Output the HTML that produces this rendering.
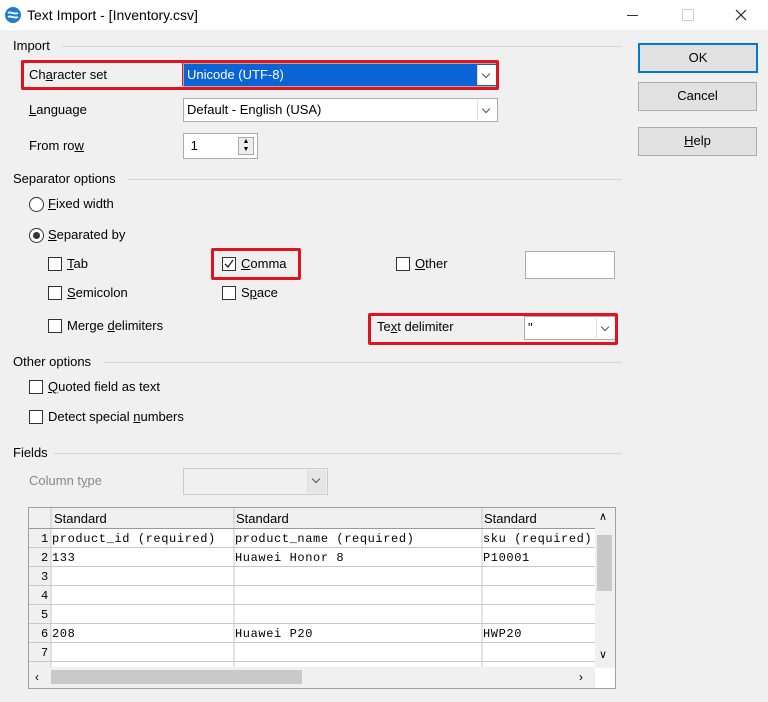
<!DOCTYPE html><html><head><style>
body{margin:0;width:768px;height:702px;background:#f0f0f0;font-family:"Liberation Sans",sans-serif;font-size:13px;color:#000;position:relative;overflow:hidden}
.a{position:absolute;white-space:nowrap}
.line{position:absolute;height:1px;background:#d5d5d5}
.btn{position:absolute;background:#e1e1e1;border:1px solid #adadad;text-align:center;line-height:26px;font-size:13px}
.cb{position:absolute;width:12px;height:12px;border:1px solid #333;background:#fff}
.red{position:absolute;border:3px solid #e0141e;border-radius:2px}
.sel{position:absolute;background:#fff;border:1px solid #acacac;font-size:13px;line-height:22px;padding-left:3px}
.arr{position:absolute;right:1px;top:1px;width:18px;bottom:1px;border-left:1px solid #ddd;background:#fff}
.arr:after{content:"";position:absolute;left:5px;top:6px;width:5px;height:5px;border-right:1.5px solid #555;border-bottom:1.5px solid #555;transform:rotate(45deg)}
.m{font-family:"Liberation Mono",monospace;font-size:12px;letter-spacing:0.6px}
.g{position:absolute;background:#fff;border:1px solid #a0a0a0}
</style></head><body>
<div class="a" style="left:0;top:0;width:768px;height:30px;background:#fff"></div>
<svg class="a" style="left:4px;top:6px" width="18" height="18" viewBox="0 0 18 18"><circle cx="9" cy="9" r="8" fill="#1e7fcf"/><path d="M4 7c3-2 6 2 10 0M4 11c3-2 6 2 10 0" stroke="#fff" stroke-width="1.8" fill="none"/></svg>
<div class="a" style="left:27px;top:7px;font-size:14px">Text Import - [Inventory.csv]</div>
<div class="a" style="left:627px;top:15px;width:11px;height:1px;background:#333"></div>
<div class="a" style="left:682px;top:9px;width:10px;height:10px;border:1px solid #ccc"></div>
<svg class="a" style="left:735px;top:9px" width="12" height="12"><path d="M1 1L11 11M11 1L1 11" stroke="#222" stroke-width="1.2"/></svg>

<div class="a" style="left:13px;top:38px">Import</div><div class="line" style="left:62px;top:46px;width:560px"></div>
<div class="sel" style="left:183px;top:63px;width:310px;height:22px;background:#0a64d6;color:#fff">Unicode (UTF-8)<div class="arr"></div></div>
<div class="red" style="left:21px;top:60px;width:472px;height:24px"></div>
<div class="a" style="left:29px;top:67px">Ch<u>a</u>racter set</div>
<div class="a" style="left:182px;top:62px;width:1px;height:24px;background:#e0141e"></div>
<div class="a" style="left:29px;top:102px"><u>L</u>anguage</div>
<div class="sel" style="left:183px;top:98px;width:310px;height:22px">Default - English (USA)<div class="arr"></div></div>
<div class="a" style="left:29px;top:138px">From ro<u>w</u></div>
<div class="sel" style="left:183px;top:133px;width:70px;height:24px;line-height:24px">&nbsp;1<div class="a" style="right:3px;top:3px;width:14px;height:16px;border:1px solid #aaa;background:#eee;font-size:7px;line-height:8px;text-align:center">▲<br>▼</div></div>

<div class="a" style="left:13px;top:171px">Separator options</div><div class="line" style="left:128px;top:179px;width:494px"></div>
<div class="a" style="left:29px;top:197px;width:13px;height:13px;border:1px solid #333;border-radius:50%;background:#fff"></div>
<div class="a" style="left:48px;top:196px"><u>F</u>ixed width</div>
<div class="a" style="left:29px;top:228px;width:13px;height:13px;border:1px solid #333;border-radius:50%;background:#fff"></div>
<div class="a" style="left:33px;top:232px;width:7px;height:7px;border-radius:50%;background:#333"></div>
<div class="a" style="left:48px;top:227px"><u>S</u>eparated by</div>
<div class="cb" style="left:48px;top:257px"></div><div class="a" style="left:67px;top:256px"><u>T</u>ab</div>
<div class="red" style="left:211px;top:248px;width:84px;height:26px"></div>
<div class="cb" style="left:222px;top:257px"></div><svg class="a" style="left:223px;top:258px" width="12" height="12"><path d="M2 6L5 9L10 2" stroke="#222" stroke-width="1.3" fill="none"/></svg><div class="a" style="left:241px;top:256px"><u>C</u>omma</div>
<div class="cb" style="left:396px;top:257px"></div><div class="a" style="left:415px;top:256px"><u>O</u>ther</div>
<div class="a" style="left:525px;top:251px;width:88px;height:26px;background:#fff;border:1px solid #acacac"></div>
<div class="cb" style="left:48px;top:286px"></div><div class="a" style="left:67px;top:285px"><u>S</u>emicolon</div>
<div class="cb" style="left:222px;top:286px"></div><div class="a" style="left:241px;top:285px">S<u>p</u>ace</div>
<div class="cb" style="left:48px;top:319px"></div><div class="a" style="left:67px;top:318px">Merge <u>d</u>elimiters</div>
<div class="sel" style="left:524px;top:316px;width:88px;height:22px">"<div class="arr"></div></div>
<div class="red" style="left:368px;top:313px;width:244px;height:26px"></div>
<div class="a" style="left:377px;top:319px">Te<u>x</u>t delimiter</div>

<div class="a" style="left:13px;top:354px">Other options</div><div class="line" style="left:105px;top:362px;width:517px"></div>
<div class="cb" style="left:29px;top:380px"></div><div class="a" style="left:48px;top:379px"><u>Q</u>uoted field as text</div>
<div class="cb" style="left:29px;top:410px"></div><div class="a" style="left:48px;top:409px">Detect special <u>n</u>umbers</div>

<div class="a" style="left:13px;top:445px">Fields</div><div class="line" style="left:54px;top:453px;width:568px"></div>
<div class="a" style="left:29px;top:473px;color:#888">Column t<u>y</u>pe</div>
<div class="a" style="left:183px;top:468px;width:143px;height:25px;background:#f0f0f0;border:1px solid #ccc"><div class="arr" style="background:#e6e6e6"></div></div>

<div class="g" style="left:28px;top:507px;width:586px;height:180px;overflow:hidden">
<svg class="a" style="left:0;top:0" width="586" height="180">
<rect x="0" y="0" width="22" height="160" fill="#f0f0f0"/><rect x="0" y="0" width="566" height="20" fill="#f0f0f0"/>
<g stroke="#c8c8c8"><line x1="22" y1="0" x2="22" y2="160"/><line x1="205" y1="0" x2="205" y2="160"/><line x1="453" y1="0" x2="453" y2="160"/>
<line x1="0" y1="20.5" x2="566" y2="20.5" stroke="#999"/><line x1="0" y1="39.5" x2="566" y2="39.5"/><line x1="0" y1="58.5" x2="566" y2="58.5"/><line x1="0" y1="77.5" x2="566" y2="77.5"/><line x1="0" y1="96.5" x2="566" y2="96.5"/><line x1="0" y1="115.5" x2="566" y2="115.5"/><line x1="0" y1="134.5" x2="566" y2="134.5"/><line x1="0" y1="153.5" x2="566" y2="153.5"/></g>
<rect x="0" y="159" width="566" height="21" fill="#f0f0f0"/><rect x="22" y="162" width="251" height="14" fill="#c9c9c9"/>
<rect x="566" y="0" width="20" height="160" fill="#f0f0f0"/><rect x="568" y="27" width="15" height="56" fill="#c9c9c9"/>
</svg>
<div class="a" style="left:25px;top:3px">Standard</div><div class="a" style="left:207px;top:3px">Standard</div><div class="a" style="left:455px;top:3px">Standard</div>
<div class="a" style="left:570px;top:2px;font-size:11px">∧</div><div class="a" style="left:570px;top:140px;font-size:11px">∨</div>
<div class="a" style="left:6px;top:162px;font-size:12px">‹</div><div class="a" style="left:550px;top:162px;font-size:12px">›</div>
<div class="a m" style="left:12px;top:22px;line-height:19px">1<br>2<br>3<br>4<br>5<br>6<br>7</div>
<div class="a m" style="left:23px;top:22px;line-height:19px">product_id (required)<br>133<br><br><br><br>208</div>
<div class="a m" style="left:206px;top:22px;line-height:19px">product_name (required)<br>Huawei Honor 8<br><br><br><br>Huawei P20</div>
<div class="a m" style="left:454px;top:22px;line-height:19px">sku (required)<br>P10001<br><br><br><br>HWP20</div>
</div>

<div class="btn" style="left:638px;top:43px;width:116px;height:26px;border:2px solid #0078d7">OK</div>
<div class="btn" style="left:638px;top:82px;width:117px;height:27px">Cancel</div>
<div class="btn" style="left:638px;top:127px;width:117px;height:27px"><u>H</u>elp</div>
</body></html>
